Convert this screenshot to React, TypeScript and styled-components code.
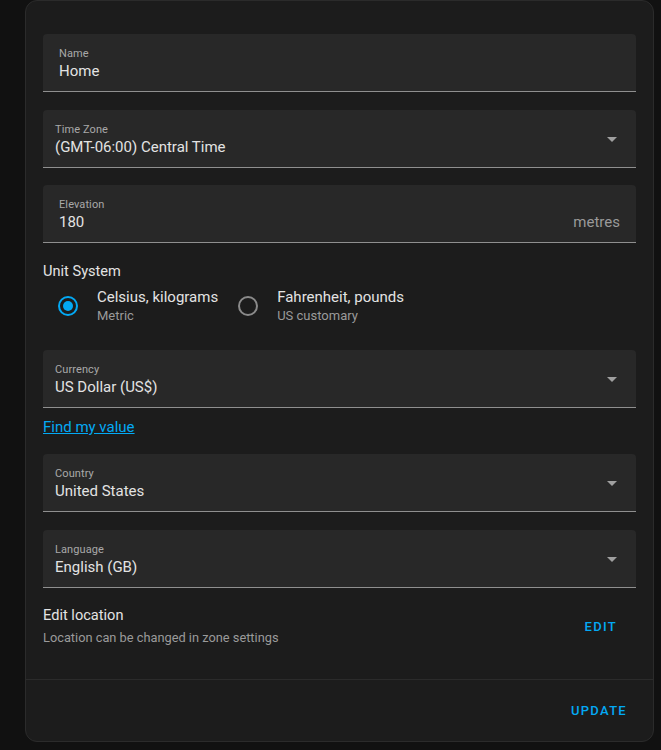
import styled, { createGlobalStyle } from 'styled-components';

const GlobalStyle = createGlobalStyle`
  html, body {
    margin: 0;
    padding: 0;
    background: #111111;
    font-family: Roboto, "Noto Sans", sans-serif;
    -webkit-font-smoothing: antialiased;
  }
`;

const Page = styled.div`
  padding-left: 25px;
  width: 629px;
  height: 750px;
`;

const Card = styled.div`
  box-sizing: border-box;
  width: 629px;
  height: 742px;
  background: #1c1c1c;
  border: 1px solid #2b2b2b;
  border-radius: 12px;
  display: flex;
  flex-direction: column;
`;

const Body = styled.div`
  flex: 1;
  padding: 33px 17px 0 17px;
  display: flex;
  flex-direction: column;
`;

const Field = styled.div<{ $select?: boolean }>`
  position: relative;
  box-sizing: border-box;
  height: 58px;
  flex-shrink: 0;
  margin-bottom: 17.5px;
  background: #282828;
  border-radius: 4px 4px 0 0;
  border-bottom: 1px solid #8f8f8f;
  padding: 0 ${(p) => (p.$select ? 12 : 16)}px;
  display: flex;
  align-items: center;
`;

const FieldText = styled.div`
  flex: 1;
  display: flex;
  flex-direction: column;
  padding-top: 3px;
`;

const Label = styled.span`
  font-size: 11px;
  line-height: 14px;
  color: #a8a8a8;
  letter-spacing: 0.1px;
`;

const Value = styled.span`
  font-size: 15px;
  line-height: 20px;
  color: #e3e3e3;
`;

const Suffix = styled.span`
  font-size: 15px;
  color: #9a9a9a;
  padding-top: 16px;
`;

const Arrow = styled.span`
  width: 0;
  height: 0;
  margin-right: 7px;
  margin-top: 2px;
  border-left: 5px solid transparent;
  border-right: 5px solid transparent;
  border-top: 5px solid #a0a0a0;
`;

const Heading = styled.div`
  font-size: 14.6px;
  color: #e3e3e3;
  line-height: 20px;
`;

const RadioRow = styled.div`
  display: flex;
  padding-left: 14px;
  margin-top: 6px;
  margin-bottom: 25px;
`;

const RadioOption = styled.label`
  display: flex;
  align-items: center;
  margin-right: 19px;
`;

const RadioCircle = styled.span<{ $checked?: boolean }>`
  box-sizing: border-box;
  width: 20px;
  height: 20px;
  border-radius: 50%;
  margin: 0 19px 0 1px;
  border: 2px solid ${(p) => (p.$checked ? '#03a9f4' : '#8a8a8a')};
  display: flex;
  align-items: center;
  justify-content: center;
  &::after {
    content: '';
    width: 10px;
    height: 10px;
    border-radius: 50%;
    background: ${(p) => (p.$checked ? '#03a9f4' : 'transparent')};
  }
`;

const RadioText = styled.div`
  display: flex;
  flex-direction: column;
`;

const RadioTitle = styled.span`
  font-size: 15px;
  line-height: 20px;
  color: #e3e3e3;
`;

const RadioSub = styled.span`
  font-size: 13px;
  line-height: 18px;
  color: #9a9a9a;
`;

const Link = styled.a`
  font-size: 15px;
  color: #03a9f4;
  text-decoration: underline;
  line-height: 20px;
  margin-top: -8px;
  margin-bottom: 17px;
  align-self: flex-start;
`;

const SettingRow = styled.div`
  display: flex;
  align-items: center;
  justify-content: space-between;
  padding-right: 11px;
`;

const SettingText = styled.div`
  display: flex;
  flex-direction: column;
`;

const SettingTitle = styled.span`
  font-size: 14.6px;
  line-height: 20px;
  color: #e3e3e3;
`;

const SettingSub = styled.span`
  font-size: 12.8px;
  line-height: 20px;
  margin-top: 3px;
  color: #9a9a9a;
`;

const TextButton = styled.button`
  background: none;
  border: none;
  font-family: Roboto, sans-serif;
  font-size: 13px;
  font-weight: 500;
  letter-spacing: 1.3px;
  color: #03a9f4;
  padding: 8px;
  cursor: pointer;
`;

const Footer = styled.div`
  border-top: 1px solid #2b2b2b;
  height: 61px;
  display: flex;
  align-items: center;
  justify-content: flex-end;
  padding-right: 18px;
`;

function TextField({ label, value, suffix, select }: { label: string; value: string; suffix?: string; select?: boolean }) {
  return (
    <Field $select={select}>
      <FieldText>
        <Label>{label}</Label>
        <Value>{value}</Value>
      </FieldText>
      {suffix && <Suffix>{suffix}</Suffix>}
      {select && <Arrow />}
    </Field>
  );
}

export default function App() {
  return (
    <>
      <GlobalStyle />
      <Page>
        <Card>
          <Body>
            <TextField label="Name" value="Home" />
            <TextField label="Time Zone" value="(GMT-06:00) Central Time" select />
            <TextField label="Elevation" value="180" suffix="metres" />
            <Heading>Unit System</Heading>
            <RadioRow>
              <RadioOption>
                <RadioCircle $checked />
                <RadioText>
                  <RadioTitle>Celsius, kilograms</RadioTitle>
                  <RadioSub>Metric</RadioSub>
                </RadioText>
              </RadioOption>
              <RadioOption>
                <RadioCircle />
                <RadioText>
                  <RadioTitle>Fahrenheit, pounds</RadioTitle>
                  <RadioSub>US customary</RadioSub>
                </RadioText>
              </RadioOption>
            </RadioRow>
            <TextField label="Currency" value="US Dollar (US$)" select />
            <Link href="#">Find my value</Link>
            <TextField label="Country" value="United States" select />
            <TextField label="Language" value="English (GB)" select />
            <SettingRow>
              <SettingText>
                <SettingTitle>Edit location</SettingTitle>
                <SettingSub>Location can be changed in zone settings</SettingSub>
              </SettingText>
              <TextButton>EDIT</TextButton>
            </SettingRow>
          </Body>
          <Footer>
            <TextButton>UPDATE</TextButton>
          </Footer>
        </Card>
      </Page>
    </>
  );
}
